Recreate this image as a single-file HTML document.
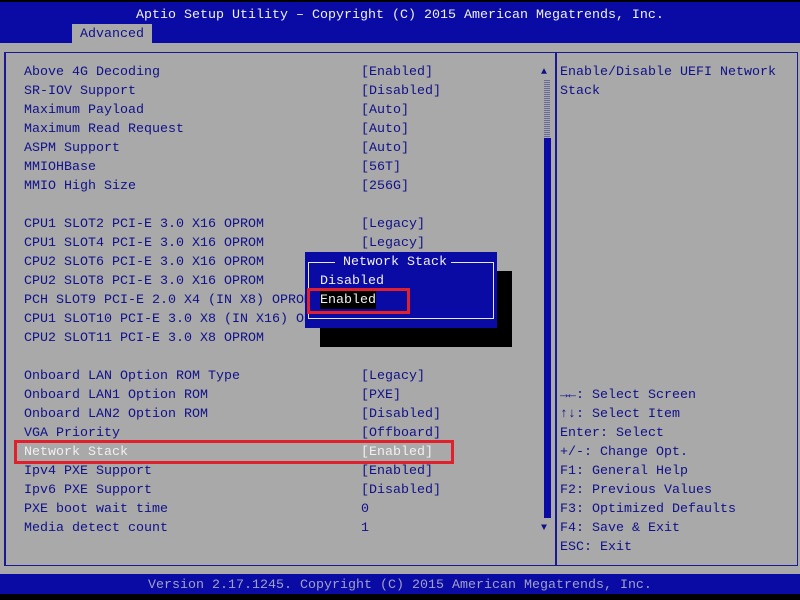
<!DOCTYPE html>
<html><head><style>
body{margin:0;width:800px;height:600px;background:#000;position:relative;overflow:hidden;font-family:"Liberation Mono","DejaVu Sans Mono",monospace;font-size:13.33px;}
div{position:absolute;}
.t{white-space:pre;line-height:19px;color:#10108a;}
.w{color:#f0f0f0;}
</style></head><body>
<div style="left:0;top:2px;width:800px;height:41px;background:#0a0aa5"></div>
<div class="t w" style="left:0;top:6px;width:800px;text-align:center">Aptio Setup Utility – Copyright (C) 2015 American Megatrends, Inc.</div>
<div style="left:72px;top:24px;width:80px;height:19px;background:#a9a9a9"></div>
<div class="t" style="left:80px;top:25px">Advanced</div>
<div style="left:0;top:43px;width:800px;height:531px;background:#a9a9a9"></div>
<div style="left:4px;top:52px;width:791px;height:512px;border:1px solid #1a1a90;border-left-width:2px"></div>
<div style="left:555px;top:52px;width:2px;height:513px;background:#1a1a90"></div>
<div style="left:544px;top:80px;width:6px;height:58px;background:repeating-linear-gradient(#6a6a9a 0 1px,#a9a9a9 1px 2px)"></div>
<div style="left:544px;top:138px;width:7px;height:380px;background:#0a0aa5"></div>
<div class="t" style="left:541px;top:63px;font-size:10px">▲</div>
<div class="t" style="left:541px;top:519px;font-size:10px">▼</div>
<div class="t" style="left:24px;top:63px">Above 4G Decoding
SR-IOV Support
Maximum Payload
Maximum Read Request
ASPM Support
MMIOHBase
MMIO High Size

CPU1 SLOT2 PCI-E 3.0 X16 OPROM
CPU1 SLOT4 PCI-E 3.0 X16 OPROM
CPU2 SLOT6 PCI-E 3.0 X16 OPROM
CPU2 SLOT8 PCI-E 3.0 X16 OPROM
PCH SLOT9 PCI-E 2.0 X4 (IN X8) OPROM
CPU1 SLOT10 PCI-E 3.0 X8 (IN X16) OPROM
CPU2 SLOT11 PCI-E 3.0 X8 OPROM

Onboard LAN Option ROM Type
Onboard LAN1 Option ROM
Onboard LAN2 Option ROM
VGA Priority
<span class="w">Network Stack</span>
Ipv4 PXE Support
Ipv6 PXE Support
PXE boot wait time
Media detect count</div>
<div class="t" style="left:361px;top:63px">[Enabled]
[Disabled]
[Auto]
[Auto]
[Auto]
[56T]
[256G]

[Legacy]
[Legacy]
[Legacy]
[Legacy]
[Legacy]
[Legacy]
[Legacy]

[Legacy]
[PXE]
[Disabled]
[Offboard]
<span class="w">[Enabled]</span>
[Enabled]
[Disabled]
0
1</div>
<div class="t" style="left:560px;top:63px">Enable/Disable UEFI Network
Stack</div>
<div class="t" style="left:560px;top:386px">→←: Select Screen
↑↓: Select Item
Enter: Select
+/-: Change Opt.
F1: General Help
F2: Previous Values
F3: Optimized Defaults
F4: Save &amp; Exit
ESC: Exit</div>
<div style="left:14px;top:440px;width:434px;height:18px;border:3px solid #e0202a"></div>
<div style="left:320px;top:271px;width:192px;height:76px;background:#000"></div>
<div style="left:305px;top:252px;width:192px;height:76px;background:#0a0aa5"></div>
<div style="left:308px;top:262px;width:184px;height:55px;border:1px solid #e8e8e8"></div>
<div style="left:335px;top:254px;width:116px;height:16px;background:#0a0aa5"></div>
<div class="t w" style="left:343px;top:253px">Network Stack</div>
<div class="t w" style="left:320px;top:272px">Disabled</div>
<div style="left:320px;top:291px;width:56px;height:18px;background:#000"></div>
<div class="t w" style="left:320px;top:291px">Enabled</div>
<div style="left:307px;top:288px;width:97px;height:20px;border:3px solid #e0202a"></div>
<div style="left:0;top:574px;width:800px;height:20px;background:#0a0aa5"></div>
<div class="t" style="left:0;top:576px;width:800px;text-align:center;color:#a0a0c8">Version 2.17.1245. Copyright (C) 2015 American Megatrends, Inc.</div>
</body></html>
